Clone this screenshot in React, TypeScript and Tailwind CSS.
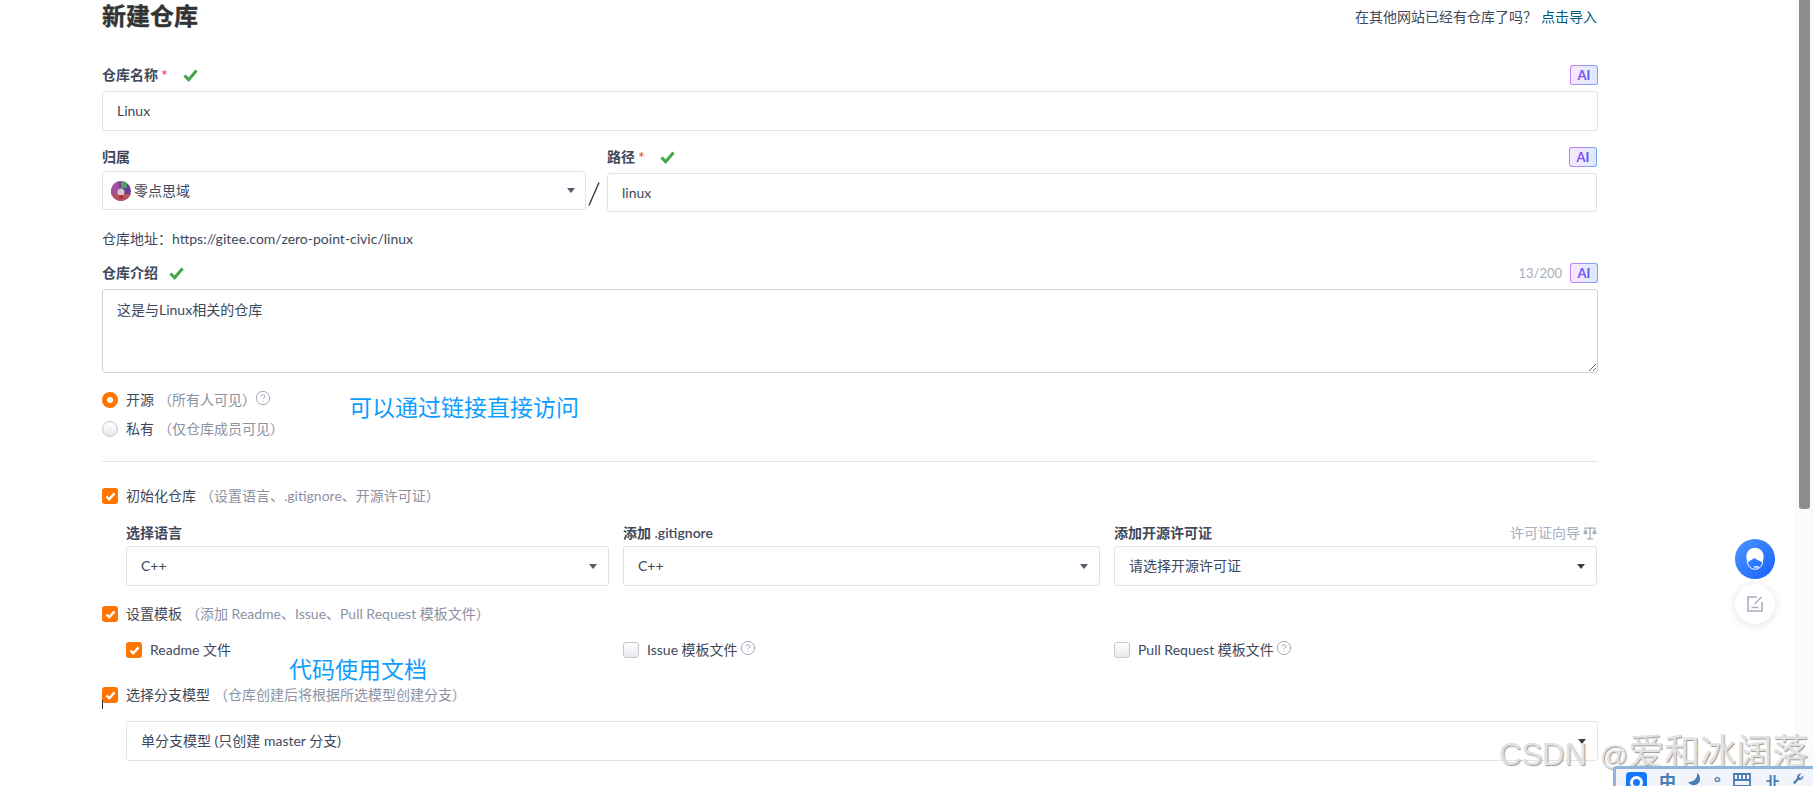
import React from "react";
import { CircleHelp } from "lucide-react";

function GreenCheck({ className = "" }: { className?: string }) {
  return (
    <svg viewBox="0 0 16 14" className={`h-[13px] w-[15px] ${className}`}>
      <path d="M1.5 7 L6 11.5 L14.5 1.6" fill="none" stroke="#43a64b" strokeWidth="3.3" />
    </svg>
  );
}

function AI() {
  return (
    <div className="h-5 w-7 rounded-[3px] bg-linear-to-r from-[#c77df5] to-[#6fa3fb] p-px">
      <div className="flex h-full w-full items-center justify-center rounded-[2px] bg-linear-to-r from-[#f6e9fe] to-[#e0e8fd]">
        <span className="bg-linear-to-r from-[#a046ee] to-[#3566f0] bg-clip-text text-[13px] font-black leading-none text-transparent">AI</span>
      </div>
    </div>
  );
}

function Caret({ dark = false }: { dark?: boolean }) {
  return (
    <svg viewBox="0 0 8 5" className="h-[5px] w-[8px]">
      <path d="M0 0 H8 L4 5 Z" fill={dark ? "#3d3d45" : "#55596a"} />
    </svg>
  );
}

function Box({ checked }: { checked: boolean }) {
  if (checked)
    return (
      <span className="flex h-4 w-4 shrink-0 items-center justify-center rounded-[3px] bg-[#ff7500]">
        <svg viewBox="0 0 12 10" className="h-[9px] w-[11px]">
          <path d="M1.5 5 L4.5 8 L10.5 1.5" fill="none" stroke="#fff" strokeWidth="2.7" />
        </svg>
      </span>
    );
  return <span className="h-4 w-4 shrink-0 rounded-[3px] border border-[#c4c6d0] bg-linear-to-b from-white to-[#e8eaee]" />;
}

function Select({ value, className = "", dark = false }: { value: string; className?: string; dark?: boolean }) {
  return (
    <div className={`flex h-10 items-center justify-between rounded-[3px] border border-[#e1e2eb] bg-white pl-[14px] pr-[11px] text-[#40485b] ${className}`}>
      <span>{value}</span>
      <Caret dark={dark} />
    </div>
  );
}

function TextInput({ value, className = "" }: { value: string; className?: string }) {
  return (
    <input
      readOnly
      value={value}
      className={`block w-full rounded-[3px] border border-[#e1e2eb] bg-white px-[14px] text-[#40485b] outline-none ${className}`}
    />
  );
}

function Label({ text, star, check }: { text: string; star?: boolean; check?: boolean }) {
  return (
    <div className="flex items-center font-semibold text-[#40485b]">
      <span>{text}</span>
      {star && <span className="ml-[3px] text-[16px] font-normal text-[#e5383b]">*</span>}
      {check && <GreenCheck className={star ? "ml-[15px]" : "ml-[11px]"} />}
    </div>
  );
}

function OptionRow({ text, hint }: { text: string; hint: string }) {
  return (
    <div className="flex h-[18px] items-center">
      <Box checked />
      <span className="ml-[8px] text-[#40485b]">{text}</span>
      <span className="ml-1 text-[#8c92a4]">{hint}</span>
    </div>
  );
}

function Avatar() {
  return (
    <svg viewBox="0 0 20 20" className="h-5 w-5">
      <defs>
        <clipPath id="av"><circle cx="10" cy="10" r="10" /></clipPath>
      </defs>
      <g clipPath="url(#av)">
        <rect width="20" height="20" fill="#6b3f8f" />
        <rect x="0" y="0" width="8" height="20" fill="#a2509d" />
        <rect x="10" y="0" width="6" height="7" fill="#5c9a6b" />
        <rect x="0" y="13" width="20" height="7" fill="#b5525f" />
        <circle cx="10" cy="11" r="3.5" fill="#d9c7c9" />
        <circle cx="10" cy="16" r="2" fill="#a12f35" />
      </g>
    </svg>
  );
}

function Help({ className = "" }: { className?: string }) {
  return <CircleHelp size={16} strokeWidth={1.2} className={`-translate-y-[2px] text-[#8c92a4] ${className}`} />;
}

function TemplateItem({ text, checked, help }: { text: string; checked: boolean; help?: boolean }) {
  return (
    <div className="flex h-[18px] items-center">
      <Box checked={checked} />
      <span className="ml-[8px] text-[#40485b]">{text}</span>
      {help && <Help className="ml-[2px]" />}
    </div>
  );
}

function ScaleIcon() {
  return (
    <svg viewBox="0 0 14 14" className="h-[14px] w-[14px]" fill="#a9aec0" stroke="#a9aec0">
      <path d="M1 2.2 H13 M7 1 V12.5 M4 12.8 H10" fill="none" strokeWidth="1.3" />
      <path d="M0.6 7 L2.5 3 L4.4 7 C4.2 8.6 0.8 8.6 0.6 7 Z" strokeWidth="0.5" />
      <path d="M9.6 7 L11.5 3 L13.4 7 C13.2 8.6 9.8 8.6 9.6 7 Z" strokeWidth="0.5" />
    </svg>
  );
}

export default function App() {
  return (
    <div className="relative h-[786px] w-[1813px] overflow-hidden bg-white font-['Lato','Noto_Sans_CJK_SC',sans-serif] text-[14px] leading-5 text-[#40485b]">
      <main className="ml-[102px] w-[1496px]">
        <header className="flex h-[34px] items-center justify-between">
          <h1 className="pb-[2px] text-[24px] font-bold leading-none text-[#333] [-webkit-text-stroke:0.4px_#333]">新建仓库</h1>
          <div className="mr-px text-[#40485b]">
            在其他网站已经有仓库了吗？<a className="ml-1 text-[#005980]">点击导入</a>
          </div>
        </header>

        <div className="mt-[31px] flex h-5 items-center justify-between">
          <Label text="仓库名称" star check />
          <AI />
        </div>
        <div className="mt-[6px]"><TextInput value="Linux" className="h-10 pb-[2px]" /></div>

        <div className="mr-px mt-[16px] flex">
          <div className="w-[484px]">
            <div className="flex h-5 items-center"><Label text="归属" /></div>
            <div className="mt-1 flex h-[39px] items-center justify-between rounded-[3px] border border-[#e1e2eb] bg-white pl-[8px] pr-[10px]">
              <div className="flex items-center gap-[3px]">
                <Avatar />
                <span>零点思域</span>
              </div>
              <Caret />
            </div>
          </div>
          <div className="w-[21px] pl-[2px] pt-[35px]">
            <svg viewBox="0 0 12 24" className="h-6 w-3"><path d="M11 0.5 L1 23.5" stroke="#333a4a" strokeWidth="1.4" /></svg>
          </div>
          <div className="flex-1">
            <div className="flex h-5 items-center justify-between">
              <Label text="路径" star check />
              <AI />
            </div>
            <div className="mt-[6px]"><TextInput value="linux" className="h-[39px]" /></div>
          </div>
        </div>

        <div className="mt-[17px] h-5">仓库地址：https://gitee.com/zero-point-civic/linux</div>

        <div className="mt-[14px] flex h-5 items-center justify-between">
          <Label text="仓库介绍" check />
          <div className="flex items-center gap-2">
            <span className="text-[13px] text-[#a9aec0]">13/200</span>
            <AI />
          </div>
        </div>
        <textarea
          readOnly
          value="这是与Linux相关的仓库"
          className="mt-[6px] block h-[84px] w-full rounded-[3px] border border-[#cfd0dc] bg-white px-[14px] py-[10px] text-[#40485b] outline-none"
        />

        <div className="mt-[17px] flex h-5 items-center">
          <span className="flex h-4 w-4 items-center justify-center rounded-full bg-[#ff7500]">
            <span className="h-[6px] w-[6px] rounded-full bg-white" />
          </span>
          <span className="ml-[8px]">开源</span>
          <span className="ml-1 text-[#8c92a4]">（所有人可见）</span>
          <Help className="-ml-px" />
        </div>
        <div className="mt-[9px] flex h-5 items-center">
          <span className="h-4 w-4 rounded-full border border-[#c4c6d0] bg-linear-to-b from-white to-[#e6e8ec]" />
          <span className="ml-[8px]">私有</span>
          <span className="ml-1 text-[#8c92a4]">（仅仓库成员可见）</span>
        </div>

        <hr className="mt-[22px] border-t border-[#e3e4ea]" />

        <div className="mt-[25px]">
          <OptionRow text="初始化仓库" hint="（设置语言、.gitignore、开源许可证）" />
        </div>

        <div className="ml-6 mr-px mt-[18px] grid grid-cols-[483px_477px_483px] gap-x-[14px]">
          <div>
            <div className="flex h-5 items-center"><Label text="选择语言" /></div>
            <Select value="C++" className="mt-[3px]" />
          </div>
          <div>
            <div className="flex h-5 items-center"><Label text="添加 .gitignore" /></div>
            <Select value="C++" className="mt-[3px]" />
          </div>
          <div>
            <div className="flex h-5 items-center justify-between">
              <Label text="添加开源许可证" />
              <span className="flex items-center gap-[3px] text-[#a9aec0]">
                许可证向导
                <ScaleIcon />
              </span>
            </div>
            <Select value="请选择开源许可证" className="mt-[3px]" dark />
          </div>
        </div>

        <div className="mt-[19px]">
          <OptionRow text="设置模板" hint="（添加 Readme、Issue、Pull Request 模板文件）" />
        </div>

        <div className="ml-6 mr-px mt-[18px] grid grid-cols-[483px_477px_483px] gap-x-[14px]">
          <TemplateItem text="Readme 文件" checked />
          <TemplateItem text="Issue 模板文件" checked={false} help />
          <TemplateItem text="Pull Request 模板文件" checked={false} help />
        </div>

        <div className="mt-[27px]">
          <OptionRow text="选择分支模型" hint="（仓库创建后将根据所选模型创建分支）" />
        </div>

        <div className="ml-6 mt-[17px]">
          <Select value="单分支模型 (只创建 master 分支)" dark />
        </div>

        <div className="mt-[25px] h-10 w-[88px] rounded-[3px] bg-[#ff7500]" />
      </main>

      {/* Text caret left over the checkbox */}
      <span className="absolute left-[102px] top-[700px] h-[9px] w-px bg-[#333]" />

      {/* Annotations drawn over the form */}
      <span className="absolute left-[349px] top-[392px] text-[23px] leading-[30px] text-[#0f9dff]">可以通过链接直接访问</span>
      <span className="absolute left-[289px] top-[654px] text-[23px] leading-[30px] text-[#0f9dff]">代码使用文档</span>

      {/* Scrollbar */}
      <div className="absolute bottom-0 right-0 top-0 w-[18px] bg-[#fafafa]">
        <div className="ml-1 h-[509px] w-[11px] rounded-b-[3px] bg-[#8c8c8c]" />
      </div>

      {/* Floating buttons */}
      <div className="absolute left-[1735px] top-[539px] flex flex-col gap-[5px]">
        <div className="flex h-10 w-10 items-center justify-center rounded-full bg-linear-to-br from-[#4d94ff] to-[#1560ff]">
          <svg viewBox="0 0 24 24" className="h-[26px] w-[26px]">
            <path d="M12 1.5 C7 1.5 3.8 5.5 4 10 C4 12 4.6 13.5 5.5 15 C7 13.5 9 13 11.5 11 C13.5 13 16.5 13.5 18.5 15 C19.5 13.5 20 12 20 10 C20.2 5.5 17 1.5 12 1.5 Z" fill="#fff" />
            <circle cx="12" cy="14.5" r="7" fill="none" stroke="#fff" strokeWidth="0.9" />
            <path d="M11 19.3 H15.5" stroke="#fff" strokeWidth="1.3" />
          </svg>
        </div>
        <div className="flex h-10 w-10 items-center justify-center rounded-full bg-white shadow-[0_1px_8px_rgba(0,0,0,0.12)]">
          <svg viewBox="0 0 16 16" className="h-4 w-4" fill="none" stroke="#a9abbd" strokeWidth="1.5">
            <path d="M10 1 H1 V15 H15 V6" />
            <path d="M4.5 11.5 H11.5" />
            <path d="M7.5 8 L14.5 1" />
          </svg>
        </div>
      </div>

      {/* Watermark */}
      <div className="absolute left-[1499px] top-[731px] flex items-baseline whitespace-nowrap font-['Liberation_Sans','Noto_Sans_CJK_SC',sans-serif] leading-[44px] text-[#e2e2e2] [text-shadow:1px_1px_1px_#9a9a9a]">
        <span className="text-[31px]">CSDN</span>
        <span className="ml-[13px] text-[28px]">@</span>
        <span className="text-[36px]">爱和冰阔落</span>
      </div>

      {/* Input method toolbar */}
      <div className="absolute left-[1613px] top-[766px] flex h-7 w-[200px] items-start rounded-tl-[4px] border-l-[3px] border-t-[3px] border-[#8fb4dc] bg-[#f1f5fb] pl-[10px] pt-[3px] text-[#4a7db3]">
        <span className="flex h-[21px] w-[21px] items-center justify-center rounded-[4px] bg-[#1678ff]">
          <span className="h-[13px] w-[13px] rounded-full border-[3px] border-white" />
        </span>
        <span className="ml-3 text-[17px] font-semibold leading-5">中</span>
        <svg viewBox="0 0 14 16" className="ml-[11px] h-4 w-[14px]"><path d="M10 1 C11 7 6 10 1 10 C4 15 13 14 13 7 C13 4 12 2 10 1 Z" fill="#4a7db3" /></svg>
        <span className="ml-[13px] text-[16px] font-bold leading-5">°,</span>
        <svg viewBox="0 0 18 16" className="ml-[9px] h-4 w-[18px]"><path d="M1 2 H17 V14 H1 Z M5 2 V8 M9 2 V8 M13 2 V8 M1 8 H17" fill="none" stroke="#4a7db3" strokeWidth="1.8" /></svg>
        <span className="ml-[14px] text-[14px] font-bold leading-5">卝</span>
        <svg viewBox="0 0 14 14" className="ml-[13px] h-[14px] w-[12px]"><path d="M13 3 L10 6 L8 4 L11 1 C8 0 5 3 6 6 L1 11 L3 13 L8 8 C11 9 14 6 13 3 Z" fill="#4a7db3" /></svg>
      </div>
    </div>
  );
}
